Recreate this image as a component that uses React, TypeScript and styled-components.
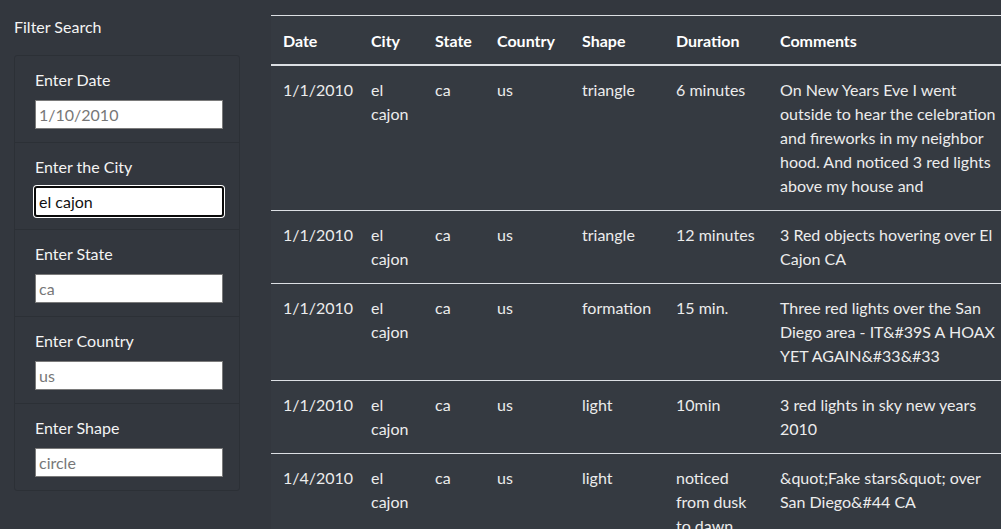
import React from 'react';
import styled, { createGlobalStyle } from 'styled-components';

const GlobalStyle = createGlobalStyle`
  html, body {
    margin: 0;
    padding: 0;
    overflow: hidden;
    background-color: #33373e;
    font-family: Lato, "Liberation Sans", sans-serif;
    color: #f2f2f2;
  }
  * { box-sizing: border-box; }
`;

const Page = styled.div`
  display: flex;
  width: 100vw;
  height: 100vh;
  overflow: hidden;
`;

const Sidebar = styled.aside`
  flex: 0 0 271px;
  padding: 17px 31px 0 14px;
`;

const SideTitle = styled.h4`
  margin: 0 0 18px;
  font-size: 16px;
  line-height: 20px;
  font-weight: 400;
  color: #f4f4f4;
`;

const FilterCard = styled.ul`
  list-style: none;
  margin: 0;
  padding: 0;
  width: 226px;
  border: 1px solid #2c3036;
  border-radius: 3px;
`;

const FilterItem = styled.li`
  box-sizing: content-box;
  height: 61px;
  padding: 12px 16px 13px 20px;
  & + & {
    border-top: 1px solid #2c3036;
  }
`;

const FilterLabel = styled.label`
  display: block;
  font-size: 16px;
  line-height: 24px;
  margin-bottom: 8px;
  color: #f4f4f4;
`;

const FilterInput = styled.input<{ $focused?: boolean }>`
  display: block;
  width: 188px;
  height: 29px;
  padding: 0 3px;
  font-family: inherit;
  font-size: 16px;
  color: #111;
  background: #fff;
  border: 1px solid #7a7a7a;
  border-radius: 0;
  outline: none;
  caret-color: transparent;

  &::placeholder {
    color: #777;
  }

  ${(p) =>
    p.$focused &&
    `
    margin: -1px;
    width: 190px;
    height: 31px;
    border: 2px solid #0a0a0a;
    border-radius: 3px;
    box-shadow: 0 0 0 1px #ffffff;
  `}
`;

const Main = styled.main`
  flex: 1;
  min-width: 0;
  padding-top: 15px;
  overflow: hidden;
`;

const Table = styled.table`
  width: 743px;
  table-layout: fixed;
  border-collapse: collapse;
  background-color: #353a41;
  font-size: 16px;
  line-height: 24px;
`;

const HeadCell = styled.th<{ $w: number }>`
  width: ${(p) => p.$w}px;
  padding: 13px 12px 11px;
  text-align: left;
  vertical-align: bottom;
  font-weight: 700;
  color: #ffffff;
  border-top: 1px solid #dcdfe3;
  border-bottom: 2px solid #dcdfe3;
`;

const Row = styled.tr`
  & + & td {
    border-top: 1px solid #dcdfe3;
  }
`;

const Cell = styled.td`
  padding: 12px;
  vertical-align: top;
  color: #ececec;
`;

const columns: { key: string; label: string; w: number }[] = [
  { key: 'date', label: 'Date', w: 88 },
  { key: 'city', label: 'City', w: 64 },
  { key: 'state', label: 'State', w: 62 },
  { key: 'country', label: 'Country', w: 85 },
  { key: 'shape', label: 'Shape', w: 94 },
  { key: 'duration', label: 'Duration', w: 104 },
  { key: 'comments', label: 'Comments', w: 246 },
];

type Sighting = Record<string, string>;

const sightings: Sighting[] = [
  {
    date: '1/1/2010',
    city: 'el cajon',
    state: 'ca',
    country: 'us',
    shape: 'triangle',
    duration: '6 minutes',
    comments:
      'On New Years Eve I went outside to hear the celebration and fireworks in my neighbor hood. And noticed 3 red lights above my house and',
  },
  {
    date: '1/1/2010',
    city: 'el cajon',
    state: 'ca',
    country: 'us',
    shape: 'triangle',
    duration: '12 minutes',
    comments: '3 Red objects hovering over El Cajon CA',
  },
  {
    date: '1/1/2010',
    city: 'el cajon',
    state: 'ca',
    country: 'us',
    shape: 'formation',
    duration: '15 min.',
    comments: 'Three red lights over the San Diego area - IT&#39S A HOAX YET AGAIN&#33&#33',
  },
  {
    date: '1/1/2010',
    city: 'el cajon',
    state: 'ca',
    country: 'us',
    shape: 'light',
    duration: '10min',
    comments: '3 red lights in sky new years 2010',
  },
  {
    date: '1/4/2010',
    city: 'el cajon',
    state: 'ca',
    country: 'us',
    shape: 'light',
    duration: 'noticed from dusk to dawn',
    comments: '&quot;Fake stars&quot; over San Diego&#44 CA',
  },
];

const filters = [
  { id: 'datetime', label: 'Enter Date', placeholder: '1/10/2010' },
  { id: 'city', label: 'Enter the City', placeholder: 'el cajon', value: 'el cajon' },
  { id: 'state', label: 'Enter State', placeholder: 'ca' },
  { id: 'country', label: 'Enter Country', placeholder: 'us' },
  { id: 'shape', label: 'Enter Shape', placeholder: 'circle' },
];

function App() {
  return (
    <>
      <GlobalStyle />
      <Page>
        <Sidebar>
          <SideTitle>Filter Search</SideTitle>
          <FilterCard>
            {filters.map((f) => (
              <FilterItem key={f.id}>
                <FilterLabel htmlFor={f.id}>{f.label}</FilterLabel>
                <FilterInput
                  id={f.id}
                  type="text"
                  placeholder={f.placeholder}
                  defaultValue={f.value}
                  $focused={!!f.value}
                />
              </FilterItem>
            ))}
          </FilterCard>
        </Sidebar>
        <Main>
          <Table>
            <thead>
              <tr>
                {columns.map((c) => (
                  <HeadCell key={c.key} $w={c.w}>
                    {c.label}
                  </HeadCell>
                ))}
              </tr>
            </thead>
            <tbody>
              {sightings.map((s, i) => (
                <Row key={i}>
                  {columns.map((c) => (
                    <Cell key={c.key}>{s[c.key]}</Cell>
                  ))}
                </Row>
              ))}
            </tbody>
          </Table>
        </Main>
      </Page>
    </>
  );
}

export default App;
